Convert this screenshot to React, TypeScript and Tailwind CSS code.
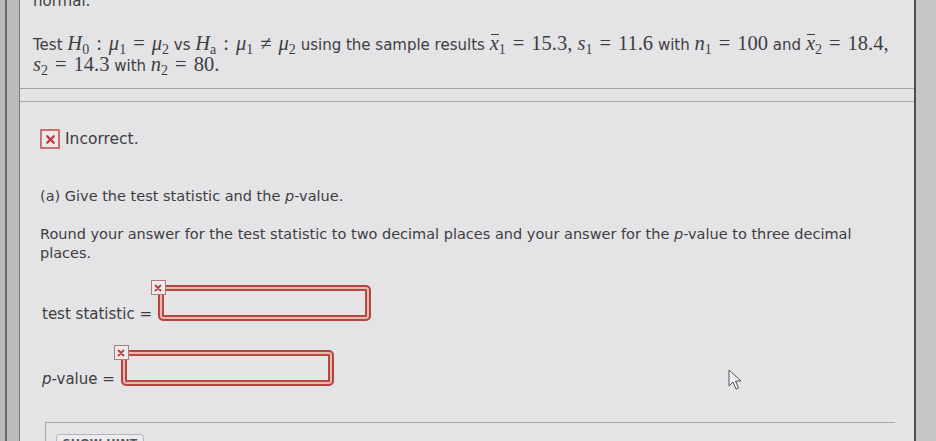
import React from 'react';

const sans = { fontFamily: '"DejaVu Sans", Verdana, sans-serif' };

function V({ children, sub }: { children: React.ReactNode; sub?: string }) {
  return (
    <span className="italic">
      {children}
      {sub && <sub className="not-italic text-[14px] leading-none">{sub}</sub>}
    </span>
  );
}

function Bar({ children }: { children: React.ReactNode }) {
  return (
    <span className="relative inline-block">
      {children}
      <span className="absolute left-[1px] right-0 top-[1px] h-[1px] bg-current" />
    </span>
  );
}

function Op({ children }: { children: React.ReactNode }) {
  return <span className="mx-[7px]">{children}</span>;
}

function Math({ children }: { children: React.ReactNode }) {
  return (
    <span className="text-[20.5px] leading-none" style={{ fontFamily: '"Liberation Serif", "Times New Roman", serif' }}>
      {children}
    </span>
  );
}

function XMark({ className = '' }: { className?: string }) {
  return (
    <svg viewBox="0 0 10 10" className={className}>
      <path d="M2.5 2.5 L7.5 7.5 M7.5 2.5 L2.5 7.5" stroke="#c0393b" strokeWidth="1.8" strokeLinecap="round" />
    </svg>
  );
}

function AnswerBox({ width }: { width: number }) {
  return (
    <span className="relative inline-block">
      <span
        className="block h-[36px] rounded-[5px] border-2 border-[#b4443f] bg-[#e7e4e6] shadow-[inset_0_0_0_2px_#eab7ad,inset_0_0_0_4px_#b24a45]"
        style={{ width }}
      />
      <span className="absolute -left-[7px] -top-[5px] flex h-[15px] w-[15px] items-center justify-center border border-[#b37a77] bg-[#ecebee]">
        <XMark className="h-[10px] w-[10px]" />
      </span>
    </span>
  );
}

export default function App() {
  return (
    <div className="flex h-[441px] w-[936px] overflow-hidden bg-[#c3c2c5] text-[#3e3e42]" style={sans}>
      <div className="flex w-[20px] shrink-0 bg-[#bbbabd]">
        <div className="ml-[5px] w-[2px] bg-[#6a6a6d]" />
        <div className="ml-auto w-[1px] bg-[#7a7a7d]" />
      </div>

      <div className="relative flex w-[894px] shrink-0 flex-col bg-[#e4e3e6]">
        <div className="h-[89px] shrink-0 border-b border-[#a3a2a6] pl-[13px] pr-[2px]">
          <p className="-mt-[8px] text-[15px] leading-[18px]">normal.</p>
          <p className="mt-[23px] text-[15px] leading-[17px] whitespace-nowrap">
            Test{' '}
            <Math>
              <V sub="0">H</V>
              <Op>:</Op>
              <V sub="1">μ</V>
              <Op>=</Op>
              <V sub="2">μ</V>
            </Math>{' '}
            vs{' '}
            <Math>
              <V sub="a">H</V>
              <Op>:</Op>
              <V sub="1">μ</V>
              <Op>≠</Op>
              <V sub="2">μ</V>
            </Math>{' '}
            using the sample results{' '}
            <Math>
              <V sub="1">
                <Bar>x</Bar>
              </V>
              <Op>=</Op>15.3, <V sub="1">s</V>
              <Op>=</Op>11.6
            </Math>{' '}
            with{' '}
            <Math>
              <V sub="1">n</V>
              <Op>=</Op>100
            </Math>{' '}
            and{' '}
            <Math>
              <V sub="2">
                <Bar>x</Bar>
              </V>
              <Op>=</Op>18.4,
            </Math>
            <br />
            <Math>
              <V sub="2">s</V>
              <Op>=</Op>14.3
            </Math>{' '}
            with{' '}
            <Math>
              <V sub="2">n</V>
              <Op>=</Op>80.
            </Math>
          </p>
        </div>

        <div className="mt-[12px] flex flex-1 flex-col border-t border-[#a9a8ac] pl-[20px]">
          <div className="mt-[27px] flex items-center gap-[5px] text-[15.5px] leading-[20px]">
            <span className="flex h-[20px] w-[20px] items-center justify-center border-2 border-[#c9736f] bg-[#efe7e8]">
              <XMark className="h-[13px] w-[13px]" />
            </span>
            <span>Incorrect.</span>
          </div>

          <p className="mt-[38px] text-[14.5px] leading-[19px]">
            (a) Give the test statistic and the <span className="italic">p</span>-value.
          </p>

          <p className="mt-[19px] w-[830px] text-[14.5px] leading-[19px]">
            Round your answer for the test statistic to two decimal places and your answer for the{' '}
            <span className="italic">p</span>-value to three decimal places.
          </p>

          <div className="mt-[22px] flex items-end gap-[6px] pl-[2px] text-[15px] leading-[19px]">
            <span className="-mb-[3px]">test statistic =</span>
            <AnswerBox width={213} />
          </div>

          <div className="mt-[29px] flex items-end gap-[6px] pl-[2px] text-[15px] leading-[19px]">
            <span className="-mb-[3px]">
              <span className="italic">p</span>-value =
            </span>
            <AnswerBox width={213} />
          </div>

          <div className="ml-[5px] mr-[19px] mt-[36px] flex-1 border-l border-t border-[#a9a8ac] pl-[10px] pt-[7px]">
            <span className="inline-block w-[88px] rounded-[3px] border border-[#b6b5b9] bg-[#ecebee] pt-[3px] text-center text-[11px] leading-[12px] font-bold tracking-wide text-[#55555a]">
              SHOW HINT
            </span>
          </div>
        </div>

        <svg viewBox="0 0 14 22" className="absolute left-[708px] top-[369px] h-[22px] w-[14px]">
          <path
            d="M1 1 L1 17 L5 13 L8 20 L10.5 19 L7.5 12 L13 12 Z"
            fill="#f2f2f4"
            stroke="#55555a"
            strokeWidth="1"
            strokeLinejoin="round"
          />
        </svg>
      </div>

      <div className="w-[2px] shrink-0 bg-[#4e4e52]" />
      <div className="flex-1 bg-[#c6c5c8]" />
    </div>
  );
}
